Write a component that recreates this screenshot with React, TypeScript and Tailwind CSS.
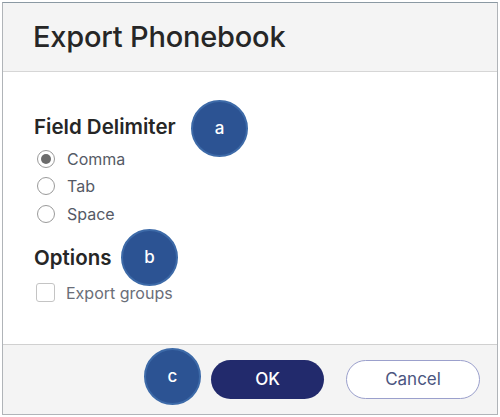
import React from "react";

function Marker({ label, className }: { label: string; className: string }) {
  return (
    <div
      className={
        "absolute flex h-[57px] w-[57px] items-center justify-center rounded-full border-2 border-[#3d6aa8] bg-[#2c5393] text-[17px] font-medium text-white " +
        className
      }
    >
      {label}
    </div>
  );
}

function Radio({ label, checked }: { label: string; checked?: boolean }) {
  return (
    <label className="flex h-[27.5px] items-center gap-[12px]">
      <span className="flex h-[18px] w-[18px] items-center justify-center rounded-full border-[1.5px] border-[#9a9a9a] bg-white">
        {checked && <span className="h-[10px] w-[10px] rounded-full bg-[#6b6b6b]" />}
      </span>
      <span className="text-[16px] text-[#555a66]">{label}</span>
    </label>
  );
}

export default function App() {
  return (
    <div
      className="h-[417px] w-[500px] bg-white pl-[2px] pt-[2px]"
      style={{ fontFamily: "Inter, 'Liberation Sans', sans-serif" }}
    >
      <div className="relative flex h-[413px] w-[496px] flex-col border border-[#b0b4b8] border-t-[#8b99a3]">
        <div className="flex h-[69px] items-center border-b border-[#d6d6d6] bg-[#f4f4f4] pl-[30px]">
          <h1 className="text-[29px] font-medium tracking-[-0.2px] text-[#262626]">Export Phonebook</h1>
        </div>

        <div className="flex flex-1 flex-col pl-[31px] pt-[43px]">
          <h2 className="text-[20.5px] font-semibold leading-[24px] text-[#262626]">Field Delimiter</h2>
          <div className="mt-[6px] flex flex-col pl-[3px]">
            <Radio label="Comma" checked />
            <Radio label="Tab" />
            <Radio label="Space" />
          </div>
          <h2 className="mt-[18px] text-[20.5px] font-semibold leading-[24px] text-[#262626]">Options</h2>
          <label className="mt-[11px] flex items-center gap-[11px] pl-[2px]">
            <span className="h-[19px] w-[19px] rounded-[3px] border-[1.5px] border-[#c4c4c4] bg-white" />
            <span className="text-[16px] text-[#6a6e78]">Export groups</span>
          </label>
        </div>

        <div className="flex h-[70px] items-center justify-end gap-[22px] border-t border-[#d0d0d0] bg-[#f4f4f4] pr-[17px]">
          <button className="h-[39px] w-[113px] rounded-full bg-[#222a6c] text-[17px] font-medium text-white">
            OK
          </button>
          <button className="h-[39px] w-[134px] rounded-full border-[1.5px] border-[#9ba0cc] bg-white text-[17px] text-[#4b5580]">
            Cancel
          </button>
        </div>

        <Marker label="a" className="left-[188px] top-[97px]" />
        <Marker label="b" className="left-[118px] top-[226px]" />
        <Marker label="c" className="left-[141px] top-[345px]" />
      </div>
    </div>
  );
}
